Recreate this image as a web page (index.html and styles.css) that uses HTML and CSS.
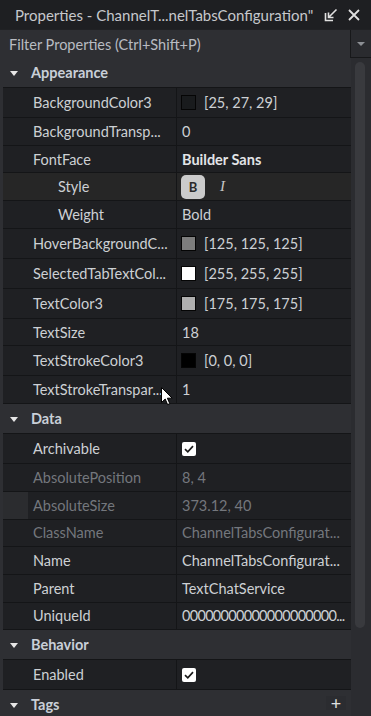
FILE: index.html
```html
<!DOCTYPE html>
<html>
<head>
<meta charset="utf-8">
<link rel="stylesheet" href="styles.css">
</head>
<body>
<div class="window">
  <div class="titlebar">
    <span class="title">Properties - ChannelT...nelTabsConfiguration"</span>
    <div class="title-icons">
      <svg class="ico" width="16" height="16" viewBox="0 0 16 16"><path d="M2.5 6v7.5H10" fill="none" stroke="#e0e0e0" stroke-width="1.6"/><path d="M13.5 2.5L5.5 10.5M5.5 5.5v5h5" fill="none" stroke="#e0e0e0" stroke-width="1.6"/></svg>
      <svg class="ico" width="14" height="14" viewBox="0 0 14 14"><path d="M2 2L12 12M12 2L2 12" stroke="#e0e0e0" stroke-width="1.8"/></svg>
    </div>
  </div>
  <div class="filter">
    <span class="filter-text">Filter Properties (Ctrl+Shift+P)</span>
    <div class="filter-btn"><span class="tri-small"></span></div>
  </div>
  <div class="content">
    <div class="list">
      <div class="section"><span class="caret"></span>Appearance</div>
      <div class="row tall"><div class="name">BackgroundColor3</div><div class="val"><span class="swatch" style="background:rgb(25,27,29)"></span><span class="txt">[25, 27, 29]</span></div></div>
      <div class="row"><div class="name">BackgroundTransp...</div><div class="val"><span class="txt">0</span></div></div>
      <div class="row"><div class="name">FontFace</div><div class="val bold"><span class="txt">Builder Sans</span></div></div>
      <div class="row style-row"><div class="name sub">Style</div><div class="val"><span class="bbtn">B</span><span class="ital">I</span></div></div>
      <div class="row"><div class="name sub">Weight</div><div class="val"><span class="txt">Bold</span></div></div>
      <div class="row tall"><div class="name">HoverBackgroundC...</div><div class="val"><span class="swatch" style="background:rgb(125,125,125)"></span><span class="txt">[125, 125, 125]</span></div></div>
      <div class="row tall"><div class="name">SelectedTabTextCol...</div><div class="val"><span class="swatch" style="background:rgb(255,255,255)"></span><span class="txt">[255, 255, 255]</span></div></div>
      <div class="row tall"><div class="name">TextColor3</div><div class="val"><span class="swatch" style="background:rgb(175,175,175)"></span><span class="txt">[175, 175, 175]</span></div></div>
      <div class="row"><div class="name">TextSize</div><div class="val"><span class="txt">18</span></div></div>
      <div class="row tall"><div class="name">TextStrokeColor3</div><div class="val"><span class="swatch" style="background:rgb(0,0,0)"></span><span class="txt">[0, 0, 0]</span></div></div>
      <div class="row"><div class="name">TextStrokeTranspar...</div><div class="val"><span class="txt">1</span></div></div>

      <div class="section"><span class="caret"></span>Data</div>
      <div class="row tall"><div class="name">Archivable</div><div class="val"><span class="check"><svg width="10" height="8" viewBox="0 0 10 8"><path d="M1 4.2L3.8 6.8L9 1.2" fill="none" stroke="#1a1a1a" stroke-width="1.7"/></svg></span></div></div>
      <div class="row ro"><div class="name">AbsolutePosition</div><div class="val"><span class="txt">8, 4</span></div></div>
      <div class="row ro"><div class="name"><span class="hoverbox"></span>AbsoluteSize</div><div class="val"><span class="txt">373.12, 40</span></div></div>
      <div class="row ro"><div class="name">ClassName</div><div class="val"><span class="txt">ChannelTabsConfigurat...</span></div></div>
      <div class="row"><div class="name">Name</div><div class="val"><span class="txt">ChannelTabsConfigurat...</span></div></div>
      <div class="row"><div class="name">Parent</div><div class="val"><span class="txt">TextChatService</span></div></div>
      <div class="row"><div class="name">UniqueId</div><div class="val"><span class="txt zeros">00000000000000000000...</span></div></div>

      <div class="section"><span class="caret"></span>Behavior</div>
      <div class="row tall"><div class="name">Enabled</div><div class="val"><span class="check"><svg width="10" height="8" viewBox="0 0 10 8"><path d="M1 4.2L3.8 6.8L9 1.2" fill="none" stroke="#1a1a1a" stroke-width="1.7"/></svg></span></div></div>

      <div class="section"><span class="caret"></span>Tags</div>
    </div>
    <div class="scrollbar"><div class="thumb"></div></div>
    <div class="addbtn">+</div>
  </div>
  <svg class="cursor" width="12" height="19" viewBox="0 0 12 19"><path d="M0.5 0.5V15.5L4.2 12L6.6 17.6L8.8 16.6L6.4 11.2H11.2Z" fill="#fff" stroke="#000" stroke-width="1"/></svg>
</div>
</body>
</html>
```

FILE: styles.css
```css
* { box-sizing: border-box; }
html, body { margin: 0; padding: 0; }
body {
  background: #2e2f33;
  font-family: "Lato", "Liberation Sans", sans-serif;
  font-size: 14.5px;
  color: #cfd2d6;
}
.window {
  position: relative;
  width: 371px;
  height: 716px;
  overflow: hidden;
  display: flex;
  flex-direction: column;
  background: #2e2f33;
}
.titlebar {
  height: 29px;
  flex: none;
  background: #1e1f22;
  display: flex;
  align-items: center;
  padding-left: 15px;
  padding-right: 10px;
}
.title {
  font-size: 15px;
  color: #c6c8cc;
  white-space: nowrap;
  flex: 1;
  overflow: hidden;
}
.title-icons {
  display: flex;
  align-items: center;
  gap: 8px;
}
.ico { display: block; }
.filter {
  height: 29px;
  flex: none;
  display: flex;
  align-items: center;
  background: #2e2f33;
  border-top: 1px solid #202124;
  padding-left: 9px;
}
.filter-text {
  flex: 1;
  color: #b9bcc2;
  font-size: 14.5px;
}
.filter-btn {
  width: 21px;
  height: 28px;
  background: #2a2b2f;
  border-left: 1px solid #17181a;
  border-bottom: 1px solid #17181a;
  display: flex;
  align-items: center;
  justify-content: center;
}
.tri-small {
  width: 0; height: 0;
  border-left: 4px solid transparent;
  border-right: 4px solid transparent;
  border-top: 4px solid #8c8f94;
}
.content {
  position: relative;
  flex: 1;
  display: flex;
  min-height: 0;
}
.list {
  flex: 1;
  min-width: 0;
  padding-left: 3px;
  display: flex;
  flex-direction: column;
}
.section {
  height: 30px;
  flex: none;
  display: flex;
  align-items: center;
  padding-left: 28px;
  font-weight: bold;
  color: #c9cfd8;
  background: #2e2f33;
  border-bottom: 1px solid #141517;
  position: relative;
}
.caret {
  position: absolute;
  left: 7px;
  top: 13px;
  width: 0; height: 0;
  border-left: 4px solid transparent;
  border-right: 4px solid transparent;
  border-top: 5px solid #e6e6e6;
}
.row {
  height: 27.7px;
  flex: none;
  display: grid;
  grid-template-columns: 173px minmax(0, 1fr);
  background: #1f2023;
  border-bottom: 1px solid #141517;
}
.row.tall { height: 30px; }
.name {
  display: flex;
  align-items: center;
  padding-left: 30px;
  white-space: nowrap;
  overflow: hidden;
  color: #cdd0d4;
  position: relative;
}
.name.sub { padding-left: 55px; }
.val {
  display: flex;
  align-items: center;
  padding-left: 5px;
  padding-right: 2px;
  border-left: 1px solid #141517;
  white-space: nowrap;
  overflow: hidden;
  min-width: 0;
  color: #cdd0d4;
}
.txt {
  white-space: nowrap;
  min-width: 0;
}
.zeros { letter-spacing: -0.7px; }
.val.bold { font-weight: bold; color: #e2e4e7; }
.ro .name, .ro .val { color: #74777d; }
.style-row { background: #262626; }
.swatch {
  width: 15px;
  height: 15px;
  border: 1px solid #050505;
  margin-left: -1px;
  margin-right: 8px;
  flex: none;
}
.bbtn {
  width: 24px;
  height: 24px;
  border-radius: 5px;
  background: #cbcbcb;
  color: #2a2a2a;
  font-weight: bold;
  font-size: 13px;
  display: flex;
  align-items: center;
  justify-content: center;
  margin-left: -1px;
}
.ital {
  font-family: "Liberation Serif", serif;
  font-style: italic;
  font-size: 15px;
  margin-left: 15px;
  color: #c8c8c8;
}
.check {
  width: 14px;
  height: 14px;
  border-radius: 2px;
  background: #ffffff;
  display: flex;
  align-items: center;
  justify-content: center;
}
.hoverbox {
  position: absolute;
  left: 0;
  top: 0;
  width: 25px;
  height: 100%;
  background: #2b2c2f;
}
.scrollbar {
  width: 20px;
  flex: none;
  background: #2b2c30;
  padding: 4px 6px 0 4px;
}
.thumb {
  height: 566px;
  border-radius: 5px;
  background: #393a3e;
}
.addbtn {
  position: absolute;
  right: 25px;
  bottom: 6px;
  width: 20px;
  height: 14px;
  background: #2b2c30;
  color: #e0e0e0;
  font-size: 18px;
  line-height: 14px;
  text-align: center;
}
.cursor {
  position: absolute;
  left: 161px;
  top: 387px;
}
```
